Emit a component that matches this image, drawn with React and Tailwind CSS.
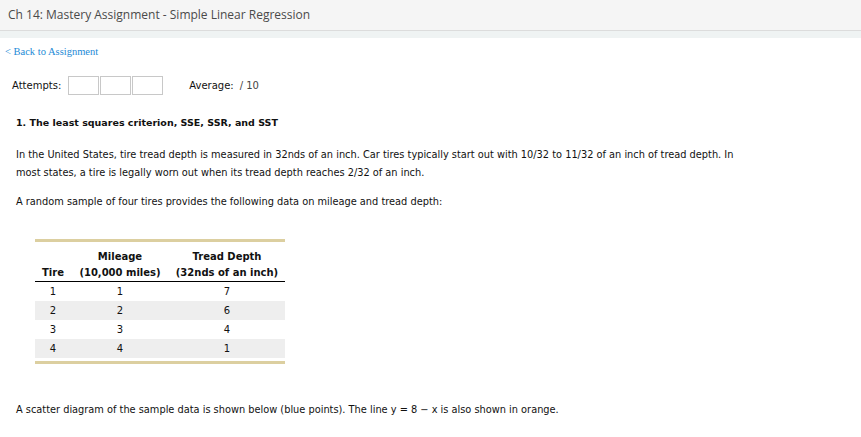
const rows = [
  [1, 1, 7],
  [2, 2, 6],
  [3, 3, 4],
  [4, 4, 1],
];

const App = () => {
  return (
    <div className="w-[861px] h-[437px] overflow-hidden bg-white font-['DejaVu_Sans',Verdana,sans-serif] text-[#111]">
      <div className="h-[31px] bg-[#f5f5f5] border-b border-[#dcdcdc] flex items-center px-[8px]">
        <h1 className="font-['Open_Sans',sans-serif] text-[12px] text-[#4a4a4a]">
          Ch 14: Mastery Assignment - Simple Linear Regression
        </h1>
      </div>
      <div className="h-[7px] bg-[#eff3f3]"></div>

      <div className="px-[5px] pt-[5px] leading-[14px]">
        <a href="#" className="font-['Liberation_Serif',serif] text-[10.5px] text-[#1d8ad6]">
          &lt; Back to Assignment
        </a>
      </div>

      <div className="flex items-center pl-[12px] mt-[17px] text-[10px]">
        <span className="mr-[7px]">Attempts:</span>
        <div className="flex gap-[1px]">
          <div className="w-[31px] h-[19px] border border-[#c8c8c8]"></div>
          <div className="w-[31px] h-[19px] border border-[#c8c8c8]"></div>
          <div className="w-[31px] h-[19px] border border-[#c8c8c8]"></div>
        </div>
        <span className="ml-[26px]">Average:</span>
        <span className="ml-[6px] text-[#444]">/ 10</span>
      </div>

      <div className="px-[16px]">
        <h2 className="mt-[21px] text-[9.5px] font-bold">1. The least squares criterion, SSE, SSR, and SST</h2>

        <p className="mt-[16px] w-[735px] text-[9.8px] leading-[18px]">
          In the United States, tire tread depth is measured in 32nds of an inch. Car tires typically start out with 10/32 to 11/32 of an inch of tread depth. In most states, a tire is legally worn out when its tread depth reaches 2/32 of an inch.
        </p>
        <p className="mt-[11px] text-[9.8px] leading-[18px]">
          A random sample of four tires provides the following data on mileage and tread depth:
        </p>

        <table className="mt-[28px] ml-[19px] w-[250px] table-fixed text-[10px] border-t-[3px] border-b-[3px] border-[#dccfa0] border-collapse">
          <colgroup>
            <col className="w-[36px]" />
            <col className="w-[98px]" />
            <col className="w-[116px]" />
          </colgroup>
          <thead>
            <tr>
              <th className="p-0"></th>
              <th className="p-0 pt-[7px] font-bold text-center">Mileage</th>
              <th className="p-0 pt-[7px] font-bold text-center">Tread Depth</th>
            </tr>
            <tr className="border-b border-black">
              <th className="p-0 pb-[1px] pt-[1px] font-bold text-center">Tire</th>
              <th className="p-0 pb-[1px] pt-[1px] font-bold text-center">(10,000 miles)</th>
              <th className="p-0 pb-[1px] pt-[1px] font-bold text-center">(32nds of an inch)</th>
            </tr>
          </thead>
          <tbody>
            {rows.map((r, i) => (
              <tr key={i} className={i % 2 === 1 ? "bg-[#eeeeee]" : ""}>
                <td className="h-[19px] p-0 text-center">{r[0]}</td>
                <td className="h-[19px] p-0 text-center">{r[1]}</td>
                <td className="h-[19px] p-0 text-center">{r[2]}</td>
              </tr>
            ))}
            <tr><td colSpan={3} className="h-[5px] p-0"></td></tr>
          </tbody>
        </table>

        <p className="mt-[39px] text-[9.8px]">
          A scatter diagram of the sample data is shown below (blue points). The line y = 8 − x is also shown in orange.
        </p>
      </div>
    </div>
  );
};

export default App;
